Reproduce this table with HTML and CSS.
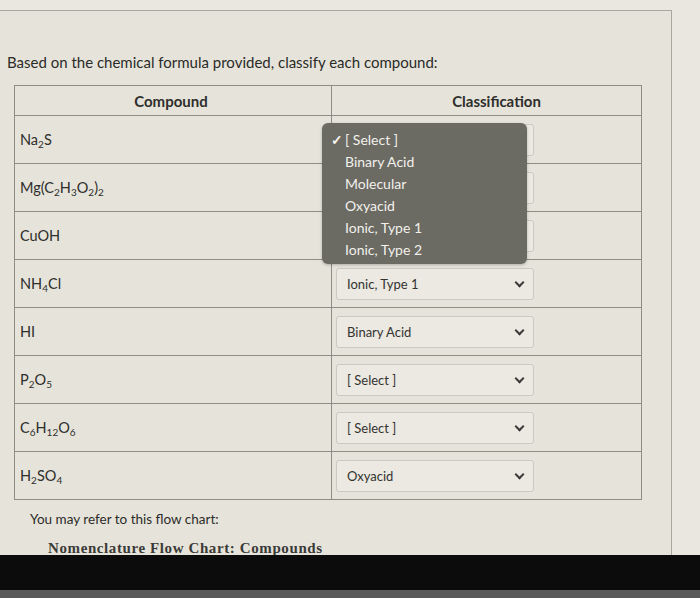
FILE: index.html
```html
<!DOCTYPE html>
<html>
<head>
<meta charset="utf-8">
<link rel="stylesheet" href="styles.css">
</head>
<body>
<div class="screen">
  <div class="frame">
    <p class="intro">Based on the chemical formula provided, classify each compound:</p>
    <div class="table-wrap">
      <table class="grid">
        <thead>
          <tr><th class="c1">Compound</th><th class="c2">Classification</th></tr>
        </thead>
        <tbody>
          <tr><td class="f">Na<sub>2</sub>S</td><td><div class="sel"><span>[ Select ]</span><i class="chev"></i></div></td></tr>
          <tr><td class="f">Mg(C<sub>2</sub>H<sub>3</sub>O<sub>2</sub>)<sub>2</sub></td><td><div class="sel"><span>[ Select ]</span><i class="chev"></i></div></td></tr>
          <tr><td class="f">CuOH</td><td><div class="sel"><span>[ Select ]</span><i class="chev"></i></div></td></tr>
          <tr><td class="f">NH<sub>4</sub>Cl</td><td><div class="sel"><span>Ionic, Type 1</span><i class="chev"></i></div></td></tr>
          <tr><td class="f">HI</td><td><div class="sel"><span>Binary Acid</span><i class="chev"></i></div></td></tr>
          <tr><td class="f">P<sub>2</sub>O<sub>5</sub></td><td><div class="sel"><span>[ Select ]</span><i class="chev"></i></div></td></tr>
          <tr><td class="f">C<sub>6</sub>H<sub>12</sub>O<sub>6</sub></td><td><div class="sel"><span>[ Select ]</span><i class="chev"></i></div></td></tr>
          <tr><td class="f">H<sub>2</sub>SO<sub>4</sub></td><td><div class="sel"><span>Oxyacid</span><i class="chev"></i></div></td></tr>
        </tbody>
      </table>
      <ul class="menu">
        <li class="checked"><span class="tick">✓</span>[ Select ]</li>
        <li>Binary Acid</li>
        <li>Molecular</li>
        <li>Oxyacid</li>
        <li>Ionic, Type 1</li>
        <li>Ionic, Type 2</li>
      </ul>
    </div>
    <p class="note">You may refer to this flow chart:</p>
    <p class="chart">Nomenclature Flow Chart: Compounds</p>
  </div>
  <div class="band"></div>
  <div class="base"></div>
</div>
</body>
</html>
```
FILE: styles.css
```css
html, body {
  margin: 0;
  padding: 0;
}
body {
  background: #e9e7df;
  font-family: Lato, "Open Sans", sans-serif;
  color: #2e2e2c;
  width: 700px;
  height: 598px;
  overflow: hidden;
}
.screen {
  display: flex;
  flex-direction: column;
  height: 598px;
}
.frame {
  margin-top: 10px;
  width: 672px;
  height: 545px;
  border-top: 1px solid #a9a79f;
  border-right: 1px solid #a9a79f;
  background: #e6e4da;
  overflow: hidden;
  box-sizing: border-box;
}
.intro {
  margin: 41px 0 0 7px;
  font-size: 15px;
  line-height: 20px;
  color: #2b2b29;
}
.table-wrap {
  position: relative;
  margin: 13px 0 0 14px;
  width: 628px;
}
.grid {
  border-collapse: collapse;
  width: 628px;
  border: 1px solid #8e8c85;
}
.grid th {
  height: 29px;
  font-weight: 700;
  font-size: 15px;
  color: #2e2e2c;
  border: 1px solid #8e8c85;
  padding: 0;
}
.grid th.c1 {
  width: 312px;
  text-align: center;
  padding-right: 4px;
}
.grid th.c2 {
  text-align: center;
  padding-left: 20px;
}
.grid td {
  height: 47px;
  border: 1px solid #8e8c85;
  padding: 0 0 0 4px;
  vertical-align: middle;
}
.grid td.f {
  font-size: 14.5px;
  padding-left: 5px;
  color: #2e2e2c;
}
sub {
  font-size: 10px;
  vertical-align: -3px;
  line-height: 0;
}
.sel {
  width: 198px;
  height: 32px;
  box-sizing: border-box;
  border: 1px solid #cac8bf;
  border-radius: 3px;
  background: #ebe9e1;
  display: flex;
  align-items: center;
  justify-content: space-between;
  padding: 0 10px 0 10px;
  font-size: 13px;
  color: #333331;
}
.chev {
  width: 5px;
  height: 5px;
  border-right: 2px solid #3a3a38;
  border-bottom: 2px solid #3a3a38;
  transform: rotate(45deg);
  margin-top: -3px;
}
.menu {
  position: absolute;
  left: 308px;
  top: 38px;
  width: 205px;
  height: 141px;
  margin: 0;
  padding: 6px 0 0 0;
  box-sizing: border-box;
  list-style: none;
  background: #6b6a63;
  border-radius: 6px;
  box-shadow: 0 1px 3px rgba(0,0,0,0.25);
}
.menu li {
  height: 22px;
  line-height: 22px;
  font-size: 14px;
  color: #f2f1ec;
  padding-left: 23px;
  position: relative;
}
.menu .tick {
  position: absolute;
  left: 9px;
  font-size: 14px;
  font-weight: 700;
}
.note {
  margin: 10px 0 0 30px;
  font-size: 13.5px;
  line-height: 18px;
  color: #2b2b29;
}
.chart {
  margin: 12px 0 0 48px;
  font-family: "Liberation Serif", "DejaVu Serif", serif;
  font-weight: 700;
  font-size: 15px;
  letter-spacing: 0.6px;
  color: #3a3a38;
  line-height: 16px;
}
.band {
  height: 35px;
  background: #0c0c0c;
}
.base {
  flex: 1;
  background: #5a5a5a;
}
```
